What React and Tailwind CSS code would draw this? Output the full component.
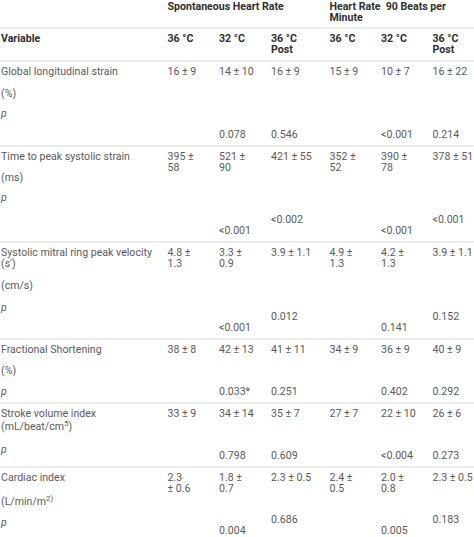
import React from "react";

const COLS = "grid grid-cols-[167.5px_51.5px_52px_58.5px_51.5px_51.5px_58px]";

const rows = [
  {
    label: [["Global longitudinal strain"]],
    unit: "(%)",
    unitMt: "mt-[11px]",
    pMt: "mt-[9px]",
    values: [["16 ± 9"], ["14 ± 10"], ["16 ± 9"], ["15 ± 9"], ["10 ± 7"], ["16 ± 22"]],
    p: ["", "0.078", "0.546", "", "<0.001", "0.214"],
    gap: "mt-[52px]",
  },
  {
    label: [["Time to peak systolic strain"]],
    unit: "(ms)",
    unitMt: "mt-[10px]",
    pMt: "mt-[9px]",
    values: [["395 ±", "58"], ["521 ±", "90"], ["421 ± 55"], ["352 ±", "52"], ["390 ±", "78"], ["378 ± 51"]],
    p: ["", "<0.001", "<0.002", "", "<0.001", "<0.001"],
    gap: "mt-[52px]",
  },
  {
    label: [["Systolic mitral ring peak velocity", "(s′)"]],
    unit: "(cm/s)",
    unitMt: "mt-[11px]",
    pMt: "mt-[10.5px]",
    values: [["4.8 ±", "1.3"], ["3.3 ±", "0.9"], ["3.9 ± 1.1"], ["4.9 ±", "1.3"], ["4.2 ±", "1.3"], ["3.9 ± 1.1"]],
    p: ["", "<0.001", "0.012", "", "0.141", "0.152"],
    gap: "mt-[53px]",
  },
  {
    label: [["Fractional Shortening"]],
    unit: "(%)",
    unitMt: "mt-[10px]",
    pMt: "mt-[10px]",
    values: [["38 ± 8"], ["42 ± 13"], ["41 ± 11"], ["34 ± 9"], ["36 ± 9"], ["40 ± 9"]],
    p: ["", "0.033*", "0.251", "", "0.402", "0.292"],
    gap: "mt-[31px]",
  },
  {
    label: [["Stroke volume index"]],
    unit: (
      <>
        (mL/beat/cm<sup>5</sup>)
      </>
    ),
    unitMt: "mt-[2px]",
    pMt: "mt-[11.5px]",
    values: [["33 ± 9"], ["34 ± 14"], ["35 ± 7"], ["27 ± 7"], ["22 ± 10"], ["26 ± 6"]],
    p: ["", "0.798", "0.609", "", "<0.004", "0.273"],
    gap: "mt-[31px]",
  },
  {
    label: [["Cardiac index"]],
    unit: (
      <>
        (L/min/m<sup>2)</sup>
      </>
    ),
    unitMt: "mt-[12.5px]",
    pMt: "mt-[10.5px]",
    values: [["2.3", "± 0.6"], ["1.8 ±", "0.7"], ["2.3 ± 0.5"], ["2.4 ±", "0.5"], ["2.0 ±", "0.8"], ["2.3 ± 0.5"]],
    p: ["", "0.004", "0.686", "", "0.005", "0.183"],
    gap: "mt-[31px]",
  },
];

function Lines({ lines }) {
  return (
    <div>
      {lines.map((l, i) => (
        <div key={i} className="whitespace-nowrap">
          {l}
        </div>
      ))}
    </div>
  );
}

export default function App() {
  return (
    <div
      className="w-[474px] h-[537px] overflow-hidden bg-white text-[#5b5b5b] text-[10.6px] leading-[11px]"
      style={{ fontFamily: "Roboto, 'Liberation Sans', sans-serif" }}
    >
      {/* header row 1 */}
      <div className={`${COLS} border-b-2 border-[#ececec] pt-[1px] pb-[4px] font-bold text-[#2e2e2e]`}>
        <div />
        <div className="col-span-3 whitespace-nowrap">Spontaneous Heart Rate</div>
        <div className="col-span-3">
          <div className="whitespace-pre">Heart Rate  90 Beats per</div>
          <div>Minute</div>
        </div>
      </div>
      {/* header row 2 */}
      <div className={`${COLS} border-b-2 border-[#ececec] pt-[4px] pb-[5px] font-bold text-[#2e2e2e]`}>
        <div className="pl-px">Variable</div>
        <div className="whitespace-nowrap">36 °C</div>
        <div className="whitespace-nowrap">32 °C</div>
        <div>
          <div className="whitespace-nowrap">36 °C</div>
          <div>Post</div>
        </div>
        <div className="whitespace-nowrap">36 °C</div>
        <div className="whitespace-nowrap">32 °C</div>
        <div>
          <div className="whitespace-nowrap">36 °C</div>
          <div>Post</div>
        </div>
      </div>
      {rows.map((r, ri) => (
        <div key={ri} className={`${COLS} border-b-2 border-[#ececec] pt-[4px] pb-[5px]`}>
          <div className="pl-px">
            <Lines lines={r.label[0]} />
            <div className={r.unitMt}>{r.unit}</div>
            <div className={`${r.pMt} italic`}>p</div>
          </div>
          {r.values.map((v, vi) => (
            <div key={vi}>
              <Lines lines={v} />
              {r.p[vi] ? <div className={`${r.gap} whitespace-nowrap`}>{r.p[vi]}</div> : null}
            </div>
          ))}
        </div>
      ))}
    </div>
  );
}
